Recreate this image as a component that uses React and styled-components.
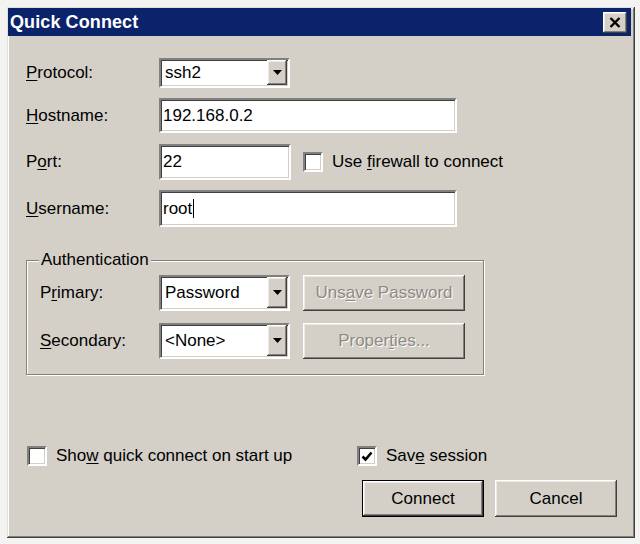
import React from 'react';
import styled, { createGlobalStyle, css } from 'styled-components';

const GlobalStyle = createGlobalStyle`
  * {
    margin: 0;
    padding: 0;
    box-sizing: border-box;
  }

  body {
    background: #f3f3f1;
    font-family: 'Liberation Sans', Arial, sans-serif;
    font-size: 17px;
    color: #000;
  }
`;

// Win2000 bevels
const raised = css`
  background: #d4d0c8;
  box-shadow: inset -1px -1px #404040, inset 1px 1px #ffffff,
    inset -2px -2px #808080, inset 2px 2px #eceae4;
`;

const sunken = css`
  background: #fff;
  border-style: solid;
  border-width: 2px;
  border-color: #808080 #ffffff #ffffff #808080;
  box-shadow: inset 1px 1px #404040, inset -1px -1px #d4d0c8;
`;

const Screen = styled.div`
  width: 640px;
  height: 544px;
  padding: 7px 5px 6px 7px;
`;

const Window = styled.div`
  width: 628px;
  height: 531px;
  display: flex;
  flex-direction: column;
  padding: 1px 4px 3px 1px;
  background: #d4d0c8;
  box-shadow: inset -1px -1px #404040, inset 1px 1px #e4e1db,
    inset -2px -2px #808080, inset 2px 2px #ffffff;
`;

const TitleBar = styled.div`
  height: 28px;
  display: flex;
  align-items: center;
  justify-content: space-between;
  padding: 0 4px 0 2px;
  background: #0b236b;
`;

const Title = styled.span`
  color: #fff;
  font-weight: bold;
  font-size: 18px;
  letter-spacing: 0.1px;
`;

const CloseButton = styled.div`
  ${raised};
  width: 24px;
  height: 21px;
  display: flex;
  align-items: center;
  justify-content: center;
`;

const Body = styled.div`
  flex: 1;
  display: flex;
  flex-direction: column;
  padding: 22px 0 0 18px;
`;

const Row = styled.div`
  display: flex;
  align-items: center;
  height: ${p => p.$h}px;
  margin-bottom: ${p => p.$mb || 0}px;
`;

const Label = styled.span`
  width: ${p => p.$w || 133}px;
  flex-shrink: 0;
`;

const Key = styled.u`
  text-decoration-thickness: 1px;
  text-underline-offset: 2px;
`;

const TextBox = styled.div`
  ${sunken};
  width: ${p => p.$w}px;
  height: 100%;
  display: flex;
  align-items: center;
  padding-left: 2px;
`;

const Caret = styled.span`
  display: inline-block;
  width: 1px;
  height: 19px;
  margin-left: 1px;
  background: #000;
`;

const Combo = styled.div`
  ${sunken};
  width: ${p => p.$w || 131}px;
  height: 100%;
  display: flex;
  align-items: stretch;
  padding: 0 0 0 4px;
`;

const ComboText = styled.span`
  flex: 1;
  display: flex;
  align-items: center;
`;

const DropButton = styled.div`
  ${raised};
  width: 20px;
  margin: 0 1px 1px 0;
  display: flex;
  align-items: center;
  justify-content: center;
`;

const CheckItem = styled.label`
  display: flex;
  align-items: center;
  gap: 9px;
  margin-left: ${p => p.$ml || 0}px;
`;

const Box = styled.span`
  ${sunken};
  width: 20px;
  height: 20px;
  display: flex;
  align-items: center;
  justify-content: center;
`;

const Group = styled.fieldset`
  width: 458px;
  margin-top: 23px;
  padding: 5px 0 15px 13px;
  border: 1px solid #808080;
  box-shadow: 1px 1px #ffffff, inset 1px 1px #ffffff;
`;

const Legend = styled.legend`
  margin-left: -1px;
  padding: 0 2px;
  line-height: 20px;
  background: #d4d0c8;
`;

const Button = styled.div`
  ${raised};
  width: ${p => p.$w || 122}px;
  height: ${p => p.$h || 37}px;
  margin-left: ${p => p.$ml || 0}px;
  display: flex;
  align-items: center;
  justify-content: center;
  color: ${p => (p.$disabled ? '#8d8a84' : '#000')};
  text-shadow: ${p => (p.$disabled ? '1px 1px #ffffff' : 'none')};
  ${p =>
    p.$default &&
    css`
      border: 1px solid #000;
      box-shadow: inset -1px -1px #404040, inset 1px 1px #ffffff,
        inset -2px -2px #808080, inset 2px 2px #eceae4;
    `}
`;

const Footer = styled.div`
  display: grid;
  grid-template-columns: 331px 1fr;
  grid-template-rows: 26px 37px;
  row-gap: 11px;
  margin-top: 68px;
`;

const ButtonRow = styled.div`
  display: flex;
  gap: 11px;
  padding-left: 5px;
`;

function Arrow() {
  return (
    <svg width="9" height="5" viewBox="0 0 9 5">
      <polygon points="0,0 9,0 4.5,5" fill="#000" />
    </svg>
  );
}

function Check({ checked }) {
  return (
    <Box>
      {checked && (
        <svg width="12" height="11" viewBox="0 0 12 11">
          <path d="M1.5 5.5 L4.5 8.5 L10.5 1.5" stroke="#000" strokeWidth="2.6" fill="none" />
        </svg>
      )}
    </Box>
  );
}

export default function App() {
  return (
    <>
      <GlobalStyle />
      <Screen>
        <Window>
          <TitleBar>
            <Title>Quick Connect</Title>
            <CloseButton>
              <svg width="12" height="11" viewBox="0 0 12 11">
                <path d="M1.5 1 L10.5 10 M10.5 1 L1.5 10" stroke="#000" strokeWidth="2.4" />
              </svg>
            </CloseButton>
          </TitleBar>

          <Body>
            <Row $h={30} $mb={10}>
              <Label><Key>P</Key>rotocol:</Label>
              <Combo>
                <ComboText>ssh2</ComboText>
                <DropButton><Arrow /></DropButton>
              </Combo>
            </Row>

            <Row $h={35} $mb={11}>
              <Label><Key>H</Key>ostname:</Label>
              <TextBox $w={298}>192.168.0.2</TextBox>
            </Row>

            <Row $h={36} $mb={10}>
              <Label>P<Key>o</Key>rt:</Label>
              <TextBox $w={132}>22</TextBox>
              <CheckItem $ml={12}>
                <Check />
                <span>Use <Key>f</Key>irewall to connect</span>
              </CheckItem>
            </Row>

            <Row $h={37}>
              <Label><Key>U</Key>sername:</Label>
              <TextBox $w={298}>root<Caret /></TextBox>
            </Row>

            <Group>
              <Legend>Authentication</Legend>
              <Row $h={36} $mb={12}>
                <Label $w={119}>P<Key>r</Key>imary:</Label>
                <Combo>
                  <ComboText>Password</ComboText>
                  <DropButton><Arrow /></DropButton>
                </Combo>
                <Button $w={162} $h={36} $ml={13} $disabled>
                  <span>Uns<Key>a</Key>ve Password</span>
                </Button>
              </Row>
              <Row $h={36}>
                <Label $w={119}><Key>S</Key>econdary:</Label>
                <Combo>
                  <ComboText>&lt;None&gt;</ComboText>
                  <DropButton><Arrow /></DropButton>
                </Combo>
                <Button $w={162} $h={36} $ml={13} $disabled>
                  <span>Proper<Key>t</Key>ies...</span>
                </Button>
              </Row>
            </Group>

            <Footer>
              <CheckItem $ml={1}>
                <Check />
                <span>Sho<Key>w</Key> quick connect on start up</span>
              </CheckItem>
              <CheckItem>
                <Check checked />
                <span>Sav<Key>e</Key> session</span>
              </CheckItem>
              <span />
              <ButtonRow>
                <Button $default>Connect</Button>
                <Button>Cancel</Button>
              </ButtonRow>
            </Footer>
          </Body>
        </Window>
      </Screen>
    </>
  );
}
